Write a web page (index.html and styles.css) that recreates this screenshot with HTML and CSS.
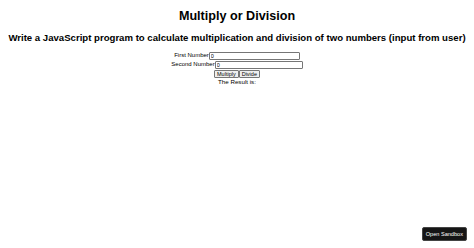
FILE: index.html
```html
<!DOCTYPE html>
<html>
<head>
<meta charset="utf-8">
<link rel="stylesheet" href="styles.css">
</head>
<body>
<div class="page">
  <h1 class="title">Multiply or Division</h1>
  <h2 class="subtitle">Write a JavaScript program to calculate multiplication and division of two numbers (input from user)</h2>
  <form class="form">
    <div class="row">First Number<input class="field field-1" type="text" value="0"></div>
    <div class="row">Second Number<input class="field field-2" type="text" value="0"></div>
    <div class="row buttons"><button type="button" class="btn">Multiply</button><button type="button" class="btn">Divide</button></div>
  </form>
  <div class="result">The Result is:</div>
</div>
<button class="sandbox">Open Sandbox</button>
</body>
</html>
```
FILE: styles.css
```css
html, body {
  margin: 0;
  padding: 0;
  background: #fff;
  height: 100%;
}
body {
  font-family: "Liberation Sans", Arial, sans-serif;
  color: #000;
  position: relative;
}
.page {
  text-align: center;
  padding-top: 8px;
}
.title {
  font-size: 12.6px;
  font-weight: bold;
  margin: 0;
  line-height: 16px;
}
.subtitle {
  font-size: 9.6px;
  font-weight: bold;
  margin: 8px 0 0 0;
  line-height: 12px;
}
.form {
  margin: 7px 0 0 0;
  font-size: 6px;
}
.row {
  display: flex;
  justify-content: center;
  align-items: center;
  height: 9px;
  line-height: 9px;
}
.field {
  font-family: "Liberation Sans", Arial, sans-serif;
  font-size: 5.5px;
  height: 8px;
  box-sizing: border-box;
  border: 1px solid #767676;
  padding: 0 1px;
  margin: 0;
  border-radius: 1px;
}
.field-1 { width: 91px; }
.field-2 { width: 88px; }
.buttons {
  height: 9px;
}
.btn {
  font-family: "Liberation Sans", Arial, sans-serif;
  font-size: 5.5px;
  height: 8px;
  line-height: 6px;
  padding: 0 2px;
  margin: 0;
  border: 1px solid #767676;
  background: #efefef;
  border-radius: 1px;
}
.result {
  font-size: 6.2px;
  line-height: 8px;
}
.sandbox {
  position: absolute;
  right: 7px;
  bottom: 7px;
  background: #151515;
  color: #fff;
  border: 1px solid #444;
  border-radius: 2px;
  font-family: "Liberation Sans", Arial, sans-serif;
  font-size: 5.6px;
  padding: 0 3px;
  height: 14px;
}
```
